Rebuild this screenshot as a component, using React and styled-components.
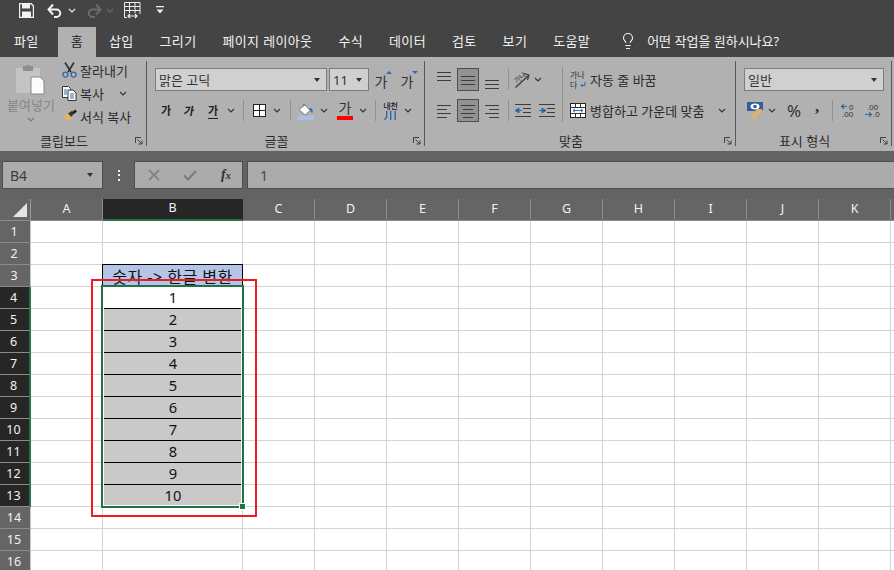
import React from "react";
import styled, { createGlobalStyle } from "styled-components";
import { Lightbulb } from "lucide-react";

const FONT = `"Noto Sans", "Noto Sans CJK KR", sans-serif`;
const INK = "#2b2b2b";

const Global = createGlobalStyle`
  html, body { margin: 0; padding: 0; background: #fff; overflow: hidden; }
  body { font-family: ${FONT}; }
`;

const Page = styled.div`
  width: 894px; height: 570px; overflow: hidden; display: flex; flex-direction: column;
`;

/* ---------- title + tabs ---------- */
const TitleBar = styled.div`
  height: 27px; background: #444; display: flex; align-items: center; padding: 0 0 7px 17px; flex: none; box-sizing: border-box;
`;
const Slot = styled.span`
  flex: none; width: ${p => p.$w}px; margin-left: ${p => p.$ml || 0}px;
  display: flex; align-items: center; justify-content: center; position: relative;
`;
const TabRow = styled.div`
  height: 30px; background: #444; display: flex; align-items: stretch; flex: none;
`;
const Tab = styled.div`
  padding: 0 13px 3px; margin-right: ${p => p.$mr || 0}px; margin-left: ${p => p.$ml || 0}px;
  display: flex; align-items: center; font-size: 13px; white-space: nowrap; letter-spacing: 0.35px;
  color: ${p => (p.$active ? "#222" : "#f2f2f2")};
  background: ${p => (p.$active ? "#b1b1b1" : "transparent")};
`;
const Search = styled.div`
  display: flex; align-items: center; margin-left: 16px; padding-bottom: 3px; gap: 10px; color: #f2f2f2; font-size: 13px; white-space: nowrap;
`;

/* ---------- ribbon ---------- */
const Ribbon = styled.div`
  height: 94px; background: #b1b1b1; flex: none; display: flex; align-items: flex-start;
  padding-top: 4px; box-sizing: border-box;
`;
const Group = styled.div`
  width: ${p => p.$w}px; height: 85px; box-sizing: border-box; flex: none;
  border-right: 1px solid #565656; display: flex; flex-direction: column;
`;
const Body = styled.div`
  flex: 1; min-height: 0; padding-left: ${p => p.$pl || 0}px; display: flex;
  flex-direction: ${p => (p.$row ? "row" : "column")}; gap: ${p => (p.$row ? 0 : 8)}px;
  padding-top: ${p => (p.$row ? 0 : 7)}px;
`;
const LabelRow = styled.div`
  height: 16px; margin-bottom: -3px; display: flex; align-items: center; flex: none;
`;
const GroupLabel = styled.div`
  flex: 1; text-align: center; font-size: 13px; line-height: 16px; color: ${INK};
`;
const Launcher = styled.span`
  width: 18px; flex: none; display: flex; justify-content: flex-end; padding-right: 3px; box-sizing: border-box;
`;
const ToolRow = styled.div`
  display: flex; align-items: center; height: 23px;
`;
const Combo = styled.div`
  width: ${p => p.$w}px; height: 23px; box-sizing: border-box; flex: none; margin-right: ${p => p.$mr || 0}px;
  background: #d0d0d0; border: 1px solid #7d7d7d; display: flex; align-items: center;
  justify-content: space-between; padding: 0 4px 0 3px; font-size: 13px; color: #333;
`;
const ComboArrow = styled.i`
  width: 0; height: 0; border-left: 3.5px solid transparent; border-right: 3.5px solid transparent;
  border-top: 4px solid #333; margin-right: 2px;
`;
const PasteColumn = styled.div`
  width: 62px; flex: none; display: flex; flex-direction: column; align-items: center; padding-top: 4px;
`;
const PasteText = styled.div`
  font-size: 13px; line-height: 16px; color: #868686; margin-top: 2px; white-space: nowrap;
`;
const SmallRows = styled.div`
  display: flex; flex-direction: column; gap: 3px; margin-top: -1px;
`;
const SmallRow = styled.div`
  display: flex; align-items: center; height: 20px; font-size: 13px; color: ${INK}; white-space: nowrap;
`;
const SmallIcon = styled.span`
  width: 18px; flex: none; display: flex; align-items: center;
`;
const Glyph = styled.span`
  font-size: 11px; line-height: 15px; color: #222;
  font-weight: ${p => (p.$bold ? 700 : 400)};
  ${p => p.$italic && "transform: skewX(-10deg);"}
  border-bottom: ${p => (p.$under ? "1px solid #222" : "none")};
`;
const GrowGlyph = styled.span`
  font-size: 14px; line-height: 16px; color: #333; position: relative; margin-top: 4px;
  &::after {
    content: ""; position: absolute; right: -5px; top: -3px; width: 0; height: 0;
    border-left: 3px solid transparent; border-right: 3px solid transparent;
    ${p => (p.$down ? "border-top: 3px solid #2f6aa8;" : "border-bottom: 3px solid #2f6aa8;")}
  }
`;
const ColorGlyph = styled.span`
  font-size: 14px; line-height: 14px; color: #333; display: flex; flex-direction: column; align-items: center;
  &::after { content: ""; width: 16px; height: 4px; background: #f00; margin-top: 1px; }
`;
const SepLine = styled.i`
  width: 1px; height: 21px; background: #8f8f8f; display: block;
`;
const AlignColumn = styled.div`
  display: flex; flex-direction: column; gap: 8px; padding-top: 7px; width: 137px; flex: none; box-sizing: border-box; padding-left: 8px;
`;
const AlignRow = styled.div`
  display: flex; align-items: center; height: 23px;
`;
const AlignButton = styled.span`
  width: 22px; height: 23px; box-sizing: border-box; flex: none; margin-right: 2px; display: flex;
  justify-content: center; padding-top: ${p => p.$pt ?? 7}px;
  background: ${p => (p.$on ? "#929292" : "transparent")};
  border: 1px solid ${p => (p.$on ? "#4f4f4f" : "transparent")};
`;
const TallSep = styled.i`
  width: 1px; height: 55px; background: #8f8f8f; flex: none; margin-top: 6px; display: block;
`;
const WrapColumn = styled.div`
  display: flex; flex-direction: column; gap: 8px; padding: 7px 0 0 7px; flex: 1; min-width: 0;
`;
const WrapRow = styled.div`
  display: flex; align-items: center; height: 23px; gap: 4px; font-size: 13px; color: ${INK}; white-space: nowrap;
`;
const StackedText = styled.span`
  width: 16px; height: 20px; flex: none; font-size: 8px; line-height: 10px; color: #333;
  display: flex; flex-direction: column; align-items: flex-start; position: relative; white-space: nowrap;
`;
const ReturnMark = styled.svg`
  position: absolute; right: 0; bottom: 2px;
`;
const RubyGlyph = styled.span`
  display: flex; flex-direction: column; align-items: center; font-size: 8px; line-height: 10px; color: #222; font-weight: 500; white-space: nowrap;
`;
const Percent = styled.span`
  font-size: 17px; color: #333; line-height: 18px;
`;
const Comma = styled.span`
  font-size: 17px; font-weight: 700; color: #333; line-height: 14px; font-family: "Liberation Serif", serif; margin-top: -8px;
`;
const IconFrame = styled.svg`
  overflow: visible;
`;

/* ---------- formula bar ---------- */
const FormulaBar = styled.div`
  height: 48px; background: #636363; flex: none; box-sizing: border-box; padding: 10px 0 10px 2px; display: flex; align-items: stretch;
`;
const NameBox = styled.div`
  width: 101px; flex: none; box-sizing: border-box; background: #ababab; border: 1px solid #4d4d4d;
  display: flex; align-items: center; justify-content: space-between; padding: 0 7px; font-size: 14px; color: #3d3d3d;
`;
const BarDots = styled.div`
  width: 31px; flex: none; display: flex; flex-direction: column; align-items: center; justify-content: center; gap: 2.5px;
  i { width: 2px; height: 2px; background: #f0f0f0; display: block; }
`;
const FnBox = styled.div`
  width: 109px; flex: none; box-sizing: border-box; background: #ababab; border: 1px solid #4d4d4d; display: flex; align-items: center;
`;
const FxText = styled.span`
  font-family: "Liberation Serif", serif; font-style: italic; font-weight: 700; font-size: 14px; color: #333;
  small { font-size: 11px; }
`;
const InputBox = styled.div`
  flex: 1; margin-left: 4px; background: #ababab; border: 1px solid #4d4d4d; border-right: none;
  display: flex; align-items: center; padding-left: 12px; font-size: 14px; color: #444;
`;

/* ---------- sheet ---------- */
const Sheet = styled.div`
  flex: 1; position: relative; overflow: hidden; background: #fff;
  display: grid; grid-template-columns: 31px 72px 140px repeat(10, 72px); grid-auto-rows: 22px;
  width: 1000px;
`;
const Corner = styled.div`
  background: #656565; border-right: 1px solid #9a9a9a; border-bottom: 1px solid #8b8b8b; position: relative; box-sizing: border-box;
  &::after {
    content: ""; position: absolute; left: 13px; top: 4px; width: 14px; height: 14px;
    background: #e4e4e4; clip-path: polygon(100% 0, 100% 100%, 0 100%);
  }
`;
const ColHead = styled.div`
  box-sizing: border-box; display: flex; align-items: center; justify-content: center;
  font-size: 12.5px; color: #f2f2f2; padding-bottom: 3px;
  background: ${p => (p.$on ? "#262626" : "#656565")};
  border-right: 1px solid ${p => (p.$on ? "#262626" : "#8b8b8b")};
  border-bottom: ${p => (p.$on ? "2px solid #217346" : "1px solid #8b8b8b")};
`;
const RowHead = styled.div`
  box-sizing: border-box; display: flex; align-items: center; justify-content: center;
  font-size: 12.5px; color: #f2f2f2; padding-right: 2px;
  background: ${p => (p.$on ? "#262626" : "#656565")};
  border-right: ${p => (p.$on ? "2px solid #217346" : "1px solid #c6c6c6")};
  border-bottom: 1px solid #8b8b8b;
`;
const Cell = styled.div`
  box-sizing: border-box; border-right: 1px solid #d4d4d4; border-bottom: 1px solid #d4d4d4;
`;
const TitleCell = styled.div`
  box-sizing: border-box; margin: -1px 0 0 -1px; background: #b4c6e7; border: 1px solid #000;
  display: flex; align-items: center; justify-content: center; font-size: 16px; letter-spacing: 0.5px; color: #111;
  white-space: nowrap; position: relative;
`;
const ValueCell = styled.div`
  box-sizing: border-box; display: flex; align-items: center; justify-content: center;
  font-size: 14.67px; color: #111; padding: 0 0 2px 2px;
  background: ${p => (p.$first ? "#fff" : "#c9c9c9")};
  border-right: 1px solid #000; border-bottom: 1px solid #000; margin-left: -1px;
`;
const RedFrame = styled.div`
  position: absolute; left: 91px; top: 80px; width: 166px; height: 238px; box-sizing: border-box;
  border: 2px solid #ed1c24; pointer-events: none;
`;
const Selection = styled.div`
  position: absolute; left: 101px; top: 86px; width: 143px; height: 223px; box-sizing: border-box;
  border: 2px solid #217346; box-shadow: inset 0 0 0 1px #fff;
`;
const FillHandle = styled.i`
  position: absolute; right: -3px; bottom: -3px; width: 5px; height: 5px; background: #217346; display: block;
  outline: 1px solid #fff;
`;

/* ---------- icons ---------- */
const Chevron = ({ c = "#333" }) => (
  <svg width="8" height="5" viewBox="0 0 8 5"><path d="M1 1l3 3 3-3" fill="none" stroke={c} strokeWidth="1.1" /></svg>
);
const SaveIcon = () => (
  <svg width="15" height="15" viewBox="0 0 15 15">
    <path d="M0.5 0.5H12L14.5 3V14.5H0.5Z" fill="none" stroke="#f2f2f2" strokeWidth="1.4" />
    <rect x="3" y="1" width="8" height="4.5" fill="#f2f2f2" />
    <rect x="3" y="8.5" width="9" height="6" fill="#f2f2f2" />
  </svg>
);
const UndoIcon = ({ c, flip }) => (
  <svg width="16" height="15" viewBox="0 0 16 15" style={flip ? { transform: "scaleX(-1)" } : undefined}>
    <path d="M2 6.5h7.5a3.7 3.7 0 0 1 0 7.5H7" fill="none" stroke={c} strokeWidth="2" />
    <path d="M6 1.5L1.5 6.5l4.5 5" fill="none" stroke={c} strokeWidth="2" />
  </svg>
);
const TableIcon = () => (
  <svg width="17" height="17" viewBox="0 0 17 17" fill="none" stroke="#eee" strokeWidth="1">
    <path d="M.5 12V.5H16V12M.5 4.5H16M5.5.5V11M11 .5V11M.5 8.5H16M.5 12v3.5H3" />
    <path d="M4 14h9M6 12l-2 2 2 2M11 12l2 2-2 2" strokeWidth="1.2" />
  </svg>
);
const QatMenu = () => (
  <svg width="8" height="8" viewBox="0 0 8 8"><rect x="0" y="0" width="8" height="1.3" fill="#eee" /><path d="M0.5 3.5h7L4 7.5z" fill="#eee" /></svg>
);
const PasteIcon = () => (
  <svg width="30" height="30" viewBox="0 0 30 30">
    <rect x="0" y="3" width="24" height="25" rx="1" fill="#c4c4c4" />
    <rect x="7" y="1" width="10" height="5" fill="#8e8e8e" />
    <rect x="10" y="0" width="4" height="2" fill="#8e8e8e" />
    <path d="M15 12h9l4 4v13H15z" fill="#fbfbfb" stroke="#777" strokeWidth=".8" />
  </svg>
);
const ScissorsIcon = () => (
  <svg width="15" height="16" viewBox="0 0 15 16" fill="none">
    <path d="M3 0.5L9 10M12 0.5L6 10" stroke="#2e2e2e" strokeWidth="1.6" />
    <circle cx="3.4" cy="12.6" r="2.5" stroke="#2f6aa8" strokeWidth="1.3" />
    <circle cx="11.6" cy="12.6" r="2.5" stroke="#2f6aa8" strokeWidth="1.3" />
  </svg>
);
const CopyIcon = () => (
  <svg width="15" height="15" viewBox="0 0 15 15">
    <path d="M.5.5h6l2 2v9H.5z" fill="#fff" stroke="#333" />
    <path d="M6 4h5l3 3v7.5H6z" fill="#fff" stroke="#333" />
    <path d="M2 4h3M2 6h3M2 8h3M8 8h4M8 10h4M8 12h4" stroke="#2f6aa8" />
  </svg>
);
const BrushIcon = () => (
  <svg width="16" height="14" viewBox="0 0 16 14">
    <path d="M1 7.5L6.5 4 10 8.5 7.5 13.5z" fill="#dfb468" />
    <path d="M6 4.5L10.5 1.5 11 5.5 9.5 8z" fill="#333" />
    <path d="M10 3.5l3-3 2 2-3.5 3z" fill="#222" />
  </svg>
);
const LauncherIcon = () => (
  <svg width="8" height="8" viewBox="0 0 8 8" fill="none" stroke="#333" strokeWidth=".9">
    <path d="M.5 6V.5H6" /><path d="M2.5 2.5L7 7M7 3.5V7H3.5" />
  </svg>
);
const BordersIcon = () => (
  <svg width="13" height="13" viewBox="0 0 13 13">
    <rect x=".5" y=".5" width="12" height="12" fill="#fff" stroke="#222" />
    <path d="M6.5 0v13M0 6.5h13" stroke="#222" />
  </svg>
);
const FillIcon = () => (
  <svg width="17" height="18" viewBox="0 0 17 18">
    <path d="M6 1.5v4" stroke="#555" strokeWidth="1" fill="none" />
    <path d="M1 7.5L7 3l5 5.5-5 4.5z" fill="#fff" stroke="#444" strokeWidth=".6" />
    <path d="M11.5 6c2.5 0 3.5 2 3 5-1.5-.5-2-2-3-5z" fill="#2f6aa8" />
    <rect x="0" y="13.5" width="16" height="4.5" fill="#a9c0e3" />
  </svg>
);
const RubyBars = () => (
  <svg width="15" height="9" viewBox="0 0 15 9" fill="#2f6aa8">
    <rect x="7" y="0" width="1.4" height="9" /><rect x="11.5" y="0" width="1.4" height="9" /><path d="M3 0h1.4v5Q4.4 8 1.5 9L1 8Q3 7 3 5z" />
  </svg>
);
const Lines = ({ rows }) => (
  <svg width="16" height={rows.length * 4} viewBox={`0 0 16 ${rows.length * 4}`}>
    {rows.map(([x, w], i) => <rect key={i} x={x} y={i * 4 + 1} width={w} height="1" fill="#3d3d3d" />)}
  </svg>
);
const OrientIcon = () => (
  <IconFrame width="18" height="18" viewBox="0 0 18 18">
    <text x="1" y="10" fontSize="7" fill="#333" transform="rotate(-40 6 8)" fontFamily={FONT}>가나</text>
    <path d="M2.5 16.5L15 5" stroke="#333" strokeWidth="1.1" />
    <path d="M11 2.5l5 1.5-1.5 5" stroke="#333" strokeWidth="1.1" fill="none" />
  </IconFrame>
);
const IndentIcon = ({ flip }) => (
  <svg width="16" height="13" viewBox="0 0 16 13">
    <path d="M0 .5H16M0 12.5H16M8 4.5H16M8 8.5H16" stroke="#3d3d3d" fill="none" />
    {flip
      ? <path d="M0 6.5h3V4l4 2.5L3 9V6.5" fill="#2f6aa8" stroke="#2f6aa8" />
      : <path d="M7 6.5H4V4L0 6.5 4 9V6.5" fill="#2f6aa8" stroke="#2f6aa8" />}
  </svg>
);
const MergeIcon = () => (
  <svg width="16" height="15" viewBox="0 0 16 15">
    <rect x=".5" y=".5" width="15" height="14" fill="#fff" stroke="#222" />
    <path d="M0 4.5h16M0 10.5h16M5.5 0v4.5M10.5 0v4.5M5.5 10.5V15M10.5 10.5V15" stroke="#333" />
    <path d="M3 7.5h10M5 5.8L3 7.5l2 1.7M11 5.8l2 1.7-2 1.7" stroke="#2f6aa8" fill="none" />
  </svg>
);
const MoneyIcon = () => (
  <svg width="17" height="17" viewBox="0 0 17 17">
    <rect x="0" y="0" width="16" height="9" fill="#2f5f9e" />
    <ellipse cx="8" cy="4.5" rx="4.5" ry="3" fill="#fff" />
    <circle cx="8" cy="4.5" r="1.8" fill="#2f5f9e" />
    <ellipse cx="12" cy="8.5" rx="3.5" ry="1.4" fill="#dfb468" />
    <ellipse cx="11.5" cy="11" rx="3.5" ry="1.2" fill="#dfb468" />
    <ellipse cx="7" cy="13" rx="3.5" ry="1.3" fill="#dfb468" />
    <ellipse cx="7" cy="15.6" rx="3.5" ry="1.3" fill="#dfb468" />
  </svg>
);
const DecimalIcon = ({ more }) => (
  <svg width="16" height="15" viewBox="0 0 16 15" fontFamily="Liberation Sans, sans-serif" fontSize="8" fill="#333">
    {more ? (
      <g>
        <path d="M7 3.5H2M4 1.2L1.5 3.5 4 5.8" stroke="#2f6aa8" strokeWidth="1.2" fill="none" />
        <text x="9" y="6.5">0</text>
        <text x="2" y="14">.00</text>
      </g>
    ) : (
      <g>
        <text x="3" y="6.5">.00</text>
        <path d="M1 11.5h6M5 9.2l2.5 2.3L5 13.8" stroke="#2f6aa8" strokeWidth="1.2" fill="none" />
        <text x="9" y="14">.0</text>
      </g>
    )}
  </svg>
);
const CancelIcon = () => (
  <svg width="12" height="12" viewBox="0 0 12 12"><path d="M1 1l10 10M11 1L1 11" stroke="#7c7c7c" strokeWidth="1.6" /></svg>
);
const CheckIcon = () => (
  <svg width="14" height="11" viewBox="0 0 14 11"><path d="M1 5.5L5 9.5 13 1" fill="none" stroke="#7c7c7c" strokeWidth="2.2" /></svg>
);

const TABS = [
  ["파일", { $ml: 1, $mr: 6 }], ["홈", { $active: true }], ["삽입", {}], ["그리기", {}],
  ["페이지 레이아웃", {}], ["수식", {}], ["데이터", {}], ["검토", {}], ["보기", {}], ["도움말", {}],
];
const COLS = ["A", "B", "C", "D", "E", "F", "G", "H", "I", "J", "K", "L"];
const ROWS = Array.from({ length: 16 }, (_, i) => i + 1);

function GroupFoot({ label, launcher = true }) {
  return (
    <LabelRow>
      <GroupLabel>{label}</GroupLabel>
      <Launcher>{launcher && <LauncherIcon />}</Launcher>
    </LabelRow>
  );
}

function Clipboard() {
  return (
    <Group $w={147}>
      <Body $row>
        <PasteColumn>
          <PasteIcon />
          <PasteText>붙여넣기</PasteText>
          <Slot $w={10} style={{ height: 12 }}><Chevron c="#777" /></Slot>
        </PasteColumn>
        <SmallRows>
          <SmallRow><SmallIcon><ScissorsIcon /></SmallIcon>잘라내기</SmallRow>
          <SmallRow><SmallIcon><CopyIcon /></SmallIcon>복사<Slot $w={12} $ml={13}><Chevron /></Slot></SmallRow>
          <SmallRow><SmallIcon><BrushIcon /></SmallIcon>서식 복사</SmallRow>
        </SmallRows>
      </Body>
      <GroupFoot label="클립보드" />
    </Group>
  );
}

function FontGroup() {
  return (
    <Group $w={278}>
      <Body $pl={8}>
        <ToolRow>
          <Combo $w={172} $mr={2}>맑은 고딕<ComboArrow /></Combo>
          <Combo $w={40}>11<ComboArrow /></Combo>
          <Slot $w={24}><GrowGlyph>가</GrowGlyph></Slot>
          <Slot $w={28}><GrowGlyph $down>가</GrowGlyph></Slot>
        </ToolRow>
        <ToolRow>
          <Slot $w={22}><Glyph $bold>가</Glyph></Slot>
          <Slot $w={24}><Glyph $italic $bold>가</Glyph></Slot>
          <Slot $w={24}><Glyph $under $bold>가</Glyph></Slot>
          <Slot $w={12}><Chevron /></Slot>
          <Slot $w={13}><SepLine /></Slot>
          <Slot $w={19}><BordersIcon /></Slot>
          <Slot $w={16}><Chevron /></Slot>
          <Slot $w={10}><SepLine /></Slot>
          <Slot $w={22}><FillIcon /></Slot>
          <Slot $w={14}><Chevron /></Slot>
          <Slot $w={28}><ColorGlyph>가</ColorGlyph></Slot>
          <Slot $w={8}><Chevron /></Slot>
          <Slot $w={16}><SepLine /></Slot>
          <Slot $w={15}><RubyGlyph>내천<RubyBars /></RubyGlyph></Slot>
          <Slot $w={20}><Chevron /></Slot>
        </ToolRow>
      </Body>
      <GroupFoot label="글꼴" />
    </Group>
  );
}

function AlignGroup() {
  return (
    <Group $w={311}>
      <Body $row>
        <AlignColumn>
          <AlignRow>
            <AlignButton $pt={2}><Lines rows={[[1, 14], [1, 14], [1, 14]]} /></AlignButton>
            <AlignButton $on $pt={6}><Lines rows={[[1, 14], [1, 14], [1, 14]]} /></AlignButton>
            <AlignButton $pt={10}><Lines rows={[[1, 14], [1, 14], [1, 14]]} /></AlignButton>
            <Slot $w={6}><SepLine /></Slot>
            <Slot $w={22}><OrientIcon /></Slot>
            <Slot $w={10}><Chevron /></Slot>
          </AlignRow>
          <AlignRow>
            <AlignButton $pt={4}><Lines rows={[[1, 14], [1, 10], [1, 14], [1, 10]]} /></AlignButton>
            <AlignButton $on $pt={4}><Lines rows={[[1, 14], [3, 10], [1, 14], [3, 10]]} /></AlignButton>
            <AlignButton $pt={4}><Lines rows={[[1, 14], [5, 10], [1, 14], [5, 10]]} /></AlignButton>
            <Slot $w={6}><SepLine /></Slot>
            <Slot $w={24}><IndentIcon /></Slot>
            <Slot $w={24}><IndentIcon flip /></Slot>
          </AlignRow>
        </AlignColumn>
        <TallSep />
        <WrapColumn>
          <WrapRow>
            <StackedText>
              <span>가나</span>
              <span>다</span>
              <ReturnMark width="6" height="6" viewBox="0 0 6 6"><path d="M5 0v3.5H1M2.5 2L1 3.5 2.5 5" fill="none" stroke="#2f6aa8" /></ReturnMark>
            </StackedText>
            <span>자동 줄 바꿈</span>
          </WrapRow>
          <WrapRow>
            <MergeIcon />
            병합하고 가운데 맞춤
            <Slot $w={10} $ml={9}><Chevron /></Slot>
          </WrapRow>
        </WrapColumn>
      </Body>
      <GroupFoot label="맞춤" />
    </Group>
  );
}

function NumberGroup() {
  return (
    <Group $w={156}>
      <Body $pl={8}>
        <ToolRow><Combo $w={140}>일반<ComboArrow /></Combo></ToolRow>
        <ToolRow>
          <Slot $w={22}><MoneyIcon /></Slot>
          <Slot $w={12}><Chevron /></Slot>
          <Slot $w={32}><Percent>%</Percent></Slot>
          <Slot $w={14}><Comma>,</Comma></Slot>
          <Slot $w={16}><SepLine /></Slot>
          <Slot $w={16}><DecimalIcon more /></Slot>
          <Slot $w={32}><DecimalIcon /></Slot>
        </ToolRow>
      </Body>
      <GroupFoot label="표시 형식" />
    </Group>
  );
}

export default function App() {
  return (
    <Page>
      <Global />
      <TitleBar>
        <Slot $w={18}><SaveIcon /></Slot>
        <Slot $w={18} $ml={11}><UndoIcon c="#f2f2f2" /></Slot>
        <Slot $w={10} $ml={3}><Chevron c="#eee" /></Slot>
        <Slot $w={18} $ml={8}><UndoIcon c="#6c6c6c" flip /></Slot>
        <Slot $w={10} $ml={2}><Chevron c="#6c6c6c" /></Slot>
        <Slot $w={18} $ml={8}><TableIcon /></Slot>
        <Slot $w={10} $ml={14}><QatMenu /></Slot>
      </TitleBar>
      <TabRow>
        {TABS.map(([t, p]) => <Tab key={t} {...p}>{t}</Tab>)}
        <Search>
          <Lightbulb size={18} strokeWidth={1.5} color="#f2f2f2" />
          어떤 작업을 원하시나요?
        </Search>
      </TabRow>
      <Ribbon>
        <Clipboard />
        <FontGroup />
        <AlignGroup />
        <NumberGroup />
      </Ribbon>
      <FormulaBar>
        <NameBox>B4<ComboArrow /></NameBox>
        <BarDots><i /><i /><i /></BarDots>
        <FnBox>
          <Slot $w={37}><CancelIcon /></Slot>
          <Slot $w={36}><CheckIcon /></Slot>
          <Slot $w={36}><FxText>f<small>x</small></FxText></Slot>
        </FnBox>
        <InputBox>1</InputBox>
      </FormulaBar>
      <Sheet>
        <Corner />
        {COLS.map(c => <ColHead key={c} $on={c === "B"}>{c === "L" ? "" : c}</ColHead>)}
        {ROWS.map(r => (
          <React.Fragment key={r}>
            <RowHead $on={r >= 4 && r <= 13}>{r}</RowHead>
            {COLS.map(c => {
              if (c === "B" && r === 3) return <TitleCell key={c}>숫자 -&gt; 한글 변환</TitleCell>;
              if (c === "B" && r >= 4 && r <= 13) return <ValueCell key={c} $first={r === 4}>{r - 3}</ValueCell>;
              return <Cell key={c} />;
            })}
          </React.Fragment>
        ))}
        <RedFrame />
        <Selection><FillHandle /></Selection>
      </Sheet>
    </Page>
  );
}
